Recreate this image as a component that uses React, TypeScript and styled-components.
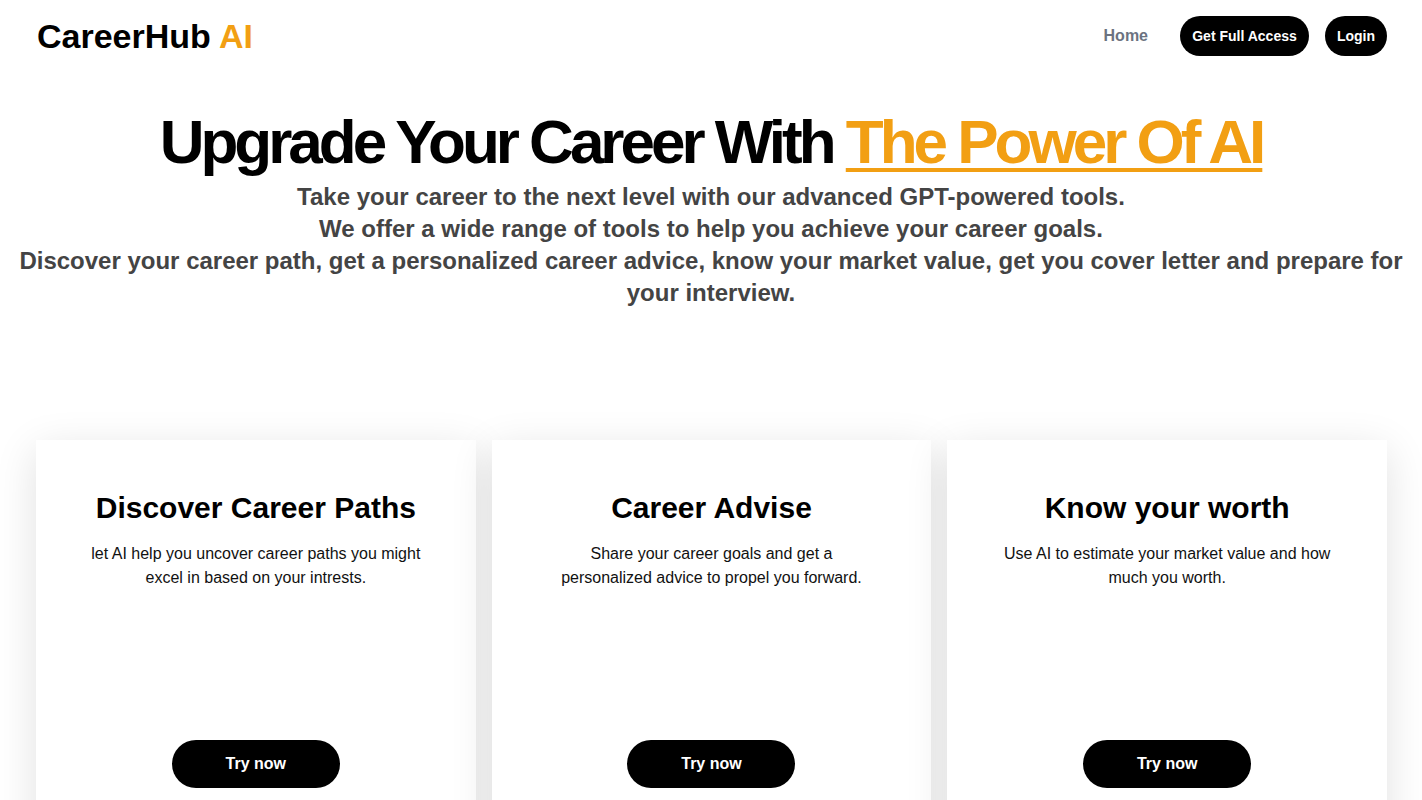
import styled, { createGlobalStyle } from "styled-components";

const GlobalStyle = createGlobalStyle`
  body {
    margin: 0;
    background: #ffffff;
    font-family: "Liberation Sans", Arial, sans-serif;
    overflow: hidden;
  }
`;

const Page = styled.div`
  width: 100%;
  min-height: 100vh;
`;

const Nav = styled.nav`
  display: flex;
  align-items: center;
  justify-content: space-between;
  height: 72px;
  padding: 0 35px 0 37px;
`;

const Logo = styled.div`
  font-size: 34px;
  font-weight: 700;
  color: #000;
  span {
    color: #f29f13;
  }
`;

const NavLinks = styled.div`
  display: flex;
  align-items: center;
  gap: 16px;
`;

const NavLink = styled.a`
  font-size: 16px;
  font-weight: 700;
  color: #6b7280;
  margin-right: 16px;
  text-decoration: none;
  cursor: pointer;
`;

const PillButton = styled.button<{ $w: number }>`
  width: ${(p) => p.$w}px;
  height: 40px;
  border: none;
  border-radius: 20px;
  background: #000;
  color: #fff;
  font-family: inherit;
  font-size: 14px;
  font-weight: 700;
  cursor: pointer;
`;

const Hero = styled.section`
  text-align: center;
  padding: 0 16px;
`;

const Title = styled.h1`
  margin: 34px 0 0;
  font-size: 62px;
  line-height: 72px;
  font-weight: 700;
  letter-spacing: -4px;
  color: #000;
  a {
    color: #f29f13;
    text-decoration: underline;
    text-decoration-thickness: 4px;
    text-underline-offset: 5px;
  }
`;

const Subtitle = styled.p`
  margin: 3px 0 0;
  font-size: 24px;
  line-height: 32px;
  font-weight: 700;
  color: #444444;
`;

const Cards = styled.div`
  display: grid;
  grid-template-columns: repeat(3, 1fr);
  gap: 16px;
  padding: 0 35px 0 36px;
  margin-top: 131px;
`;

const Card = styled.div`
  background: #fff;
  height: 420px;
  display: flex;
  flex-direction: column;
  align-items: center;
  padding: 46px 40px 0;
  box-shadow: 0 10px 40px rgba(0, 0, 0, 0.12);
  text-align: center;
`;

const CardTitle = styled.h2`
  margin: 0;
  font-size: 30px;
  line-height: 44px;
  font-weight: 700;
  color: #000;
`;

const CardText = styled.p`
  margin: 12px 0 0;
  font-size: 16px;
  line-height: 24px;
  color: #111;
  max-width: 334px;
  flex: 1;
`;

const TryButton = styled.button`
  width: 168px;
  height: 48px;
  margin-bottom: 118px;
  border: none;
  border-radius: 24px;
  background: #000;
  color: #fff;
  font-family: inherit;
  font-size: 16px;
  font-weight: 700;
  cursor: pointer;
`;

const tools = [
  {
    title: "Discover Career Paths",
    text: "let AI help you uncover career paths you might excel in based on your intrests.",
  },
  {
    title: "Career Advise",
    text: "Share your career goals and get a personalized advice to propel you forward.",
  },
  {
    title: "Know your worth",
    text: "Use AI to estimate your market value and how much you worth.",
  },
];

const App = () => {
  return (
    <Page>
      <GlobalStyle />
      <Nav>
        <Logo>
          CareerHub <span>AI</span>
        </Logo>
        <NavLinks>
          <NavLink>Home</NavLink>
          <PillButton $w={129}>Get Full Access</PillButton>
          <PillButton $w={62}>Login</PillButton>
        </NavLinks>
      </Nav>
      <Hero>
        <Title>
          Upgrade Your Career With <a>The Power Of AI</a>
        </Title>
        <Subtitle>
          Take your career to the next level with our advanced GPT-powered tools.
          <br />
          We offer a wide range of tools to help you achieve your career goals.
          <br />
          Discover your career path, get a personalized career advice, know your
          market value, get you cover letter and prepare for your interview.
        </Subtitle>
      </Hero>
      <Cards>
        {tools.map((t) => (
          <Card key={t.title}>
            <CardTitle>{t.title}</CardTitle>
            <CardText>{t.text}</CardText>
            <TryButton>Try now</TryButton>
          </Card>
        ))}
      </Cards>
    </Page>
  );
};

export default App;
